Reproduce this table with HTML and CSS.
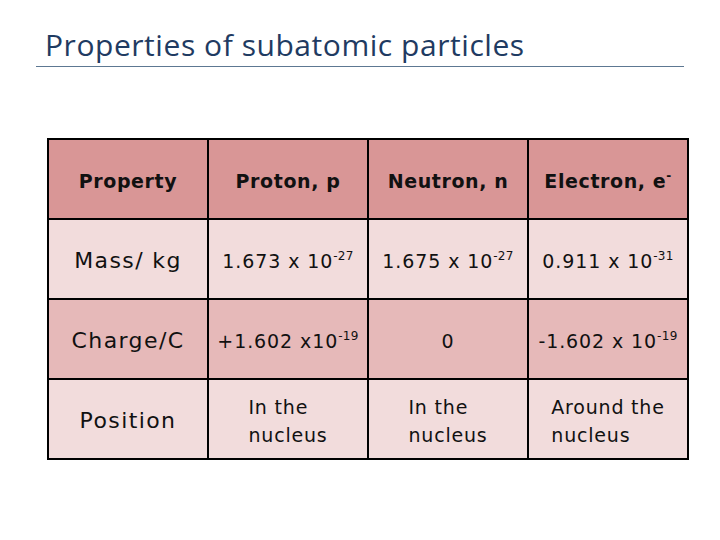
FILE: index.html
```html
<!DOCTYPE html>
<html>
<head>
<meta charset="utf-8">
<link rel="stylesheet" href="styles.css">
</head>
<body>
<div class="slide">
  <h1 class="title">Properties of subatomic particles</h1>
  <div class="rule"></div>
  <table class="grid">
    <tr class="head">
      <th>Property</th>
      <th>Proton, p</th>
      <th>Neutron, n</th>
      <th>Electron, e<sup>-</sup></th>
    </tr>
    <tr class="light">
      <td class="label">Mass/ kg</td>
      <td class="num">1.673 x 10<sup>-27</sup></td>
      <td class="num">1.675 x 10<sup>-27</sup></td>
      <td class="num">0.911 x 10<sup>-31</sup></td>
    </tr>
    <tr class="mid">
      <td class="label">Charge/C</td>
      <td class="num">+1.602 x10<sup>-19</sup></td>
      <td class="num">0</td>
      <td class="num">-1.602 x 10<sup>-19</sup></td>
    </tr>
    <tr class="light">
      <td class="label">Position</td>
      <td class="pos"><span class="block">In the<br>nucleus</span></td>
      <td class="pos"><span class="block">In the<br>nucleus</span></td>
      <td class="pos"><span class="block">Around the<br>nucleus</span></td>
    </tr>
  </table>
</div>
</body>
</html>
```
FILE: styles.css
```css
html, body {
  margin: 0;
  padding: 0;
  background: #ffffff;
}
.slide {
  width: 720px;
  height: 540px;
  position: relative;
  overflow: hidden;
}
.title {
  margin: 0;
  padding: 25px 0 0 45px;
  font-family: "Open Sans", "Liberation Sans", sans-serif;
  font-weight: 400;
  font-size: 30px;
  line-height: 40px;
  color: #1f3b62;
  letter-spacing: 0.55px;
}
.rule {
  margin: 1px 0 0 36px;
  width: 648px;
  height: 1px;
  background: #5d7892;
}
.grid {
  margin: 71px 0 0 47px;
  border-collapse: collapse;
  border: 2px solid #000;
  font-family: "DejaVu Sans", "Liberation Sans", sans-serif;
  color: #111;
  table-layout: fixed;
}
.grid th, .grid td {
  width: 158px;
  height: 75px;
  border: 2px solid #000;
  text-align: center;
  vertical-align: middle;
  padding: 3px 0 0;
}
.grid th {
  font-weight: 700;
  font-size: 19px;
  letter-spacing: 0.6px;
}
.head th { background: #d99696; }
.light td { background: #f2dcdc; }
.mid td { background: #e6b9b9; }
.label {
  font-size: 22px;
  letter-spacing: 1.4px;
}
.num {
  font-size: 19px;
  letter-spacing: 0.9px;
}
.num sup, th sup {
  font-size: 12px;
  letter-spacing: 0.3px;
  vertical-align: 8px;
  line-height: 0;
}
.pos {
  font-size: 19px;
  letter-spacing: 0.8px;
  line-height: 28px;
}
.block {
  display: inline-block;
  text-align: left;
}
```
